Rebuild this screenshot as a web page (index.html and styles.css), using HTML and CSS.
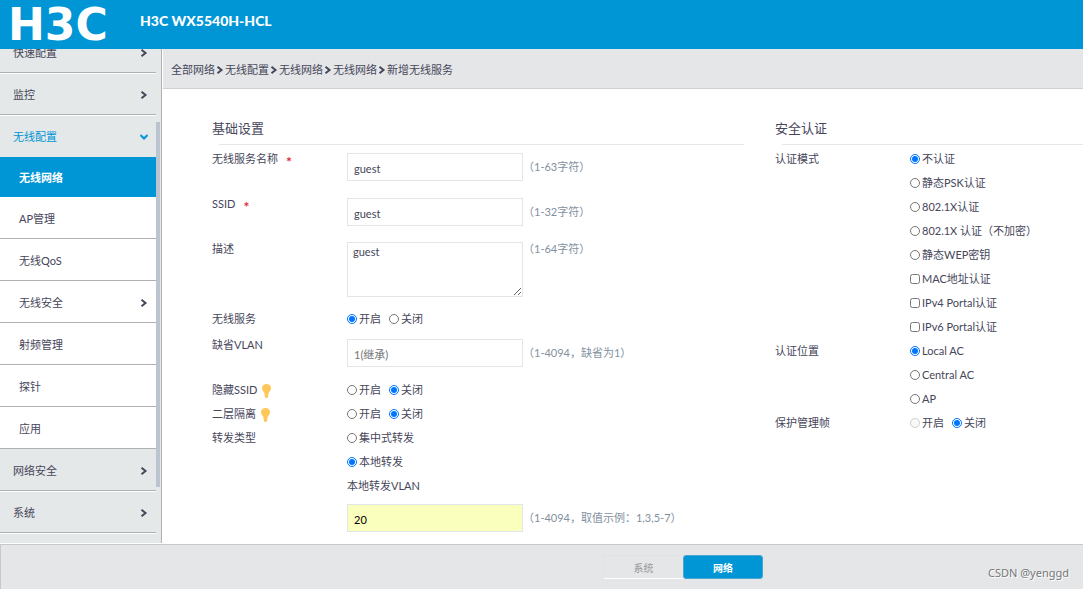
FILE: index.html
```html
<!DOCTYPE html>
<html lang="zh-CN">
<head>
  <meta charset="utf-8">
  <title>H3C WX5540H-HCL</title>
  <link rel="stylesheet" href="styles.css">
</head>
<body>

  <!-- Shared icons -->
  <svg class="sprite" aria-hidden="true">
    <symbol id="right" viewBox="0 0 8 8"><path d="M1.5 0.8 L5.5 4 L1.5 7.2" fill="none" stroke="currentColor" stroke-width="2"/></symbol>
    <symbol id="down" viewBox="0 0 8 8"><path d="M0.5 2 L4 5.5 L7.5 2" fill="none" stroke="currentColor" stroke-width="2"/></symbol>
    <symbol id="bulb" viewBox="0 0 9 14"><path d="M4.5 0 C2 0 0 1.900 0 4.300 C0 6.500 2 7.600 2.500 9.500 L2.800 12.500 Q3 14 4.500 14 Q6 14 6.200 12.500 L6.500 9.500 C7 7.600 9 6.500 9 4.300 C9 1.900 7 0 4.500 0 Z" fill="#ffc658"/></symbol>
  </svg>

  <header class="header">
    <div class="logo">H3C</div>
    <h1>H3C WX5540H-HCL</h1>
  </header>

  <div class="main">
    <nav class="sidebar">
      <div class="menu">
        <a class="item" href="#">快速配置<svg class="arrow"><use href="#right"/></svg></a>
        <a class="item" href="#">监控<svg class="arrow"><use href="#right"/></svg></a>
        <a class="item open" href="#">无线配置<svg class="arrow"><use href="#down"/></svg></a>
        <a class="sub active" href="#">无线网络</a>
        <a class="sub" href="#">AP管理</a>
        <a class="sub" href="#">无线QoS</a>
        <a class="sub" href="#">无线安全<svg class="arrow"><use href="#right"/></svg></a>
        <a class="sub" href="#">射频管理</a>
        <a class="sub" href="#">探针</a>
        <a class="sub" href="#">应用</a>
        <a class="item" href="#">网络安全<svg class="arrow"><use href="#right"/></svg></a>
        <a class="item" href="#">系统<svg class="arrow"><use href="#right"/></svg></a>
      </div>
      <div class="thumb"></div>
    </nav>

    <main class="content">
      <div class="breadcrumb">
        <a href="#">全部网络</a><svg><use href="#right"/></svg>
        <a href="#">无线配置</a><svg><use href="#right"/></svg>
        <a href="#">无线网络</a><svg><use href="#right"/></svg>
        <a href="#">无线网络</a><svg><use href="#right"/></svg>
        <span>新增无线服务</span>
      </div>

      <form class="form">
        <!-- Basic settings -->
        <section>
          <h2>基础设置</h2>
          <div class="row field">
            <label class="name" for="service">无线服务名称<b>*</b></label>
            <div class="control">
              <input class="box" id="service" type="text" value="guest"><span class="hint">（1-63字符）</span>
            </div>
          </div>
          <div class="row field">
            <label class="name" for="ssid">SSID<b>*</b></label>
            <div class="control">
              <input class="box" id="ssid" type="text" value="guest"><span class="hint">（1-32字符）</span>
            </div>
          </div>
          <div class="row field">
            <label class="name" for="desc">描述</label>
            <div class="control top">
              <textarea class="box" id="desc">guest</textarea><span class="hint">（1-64字符）</span>
            </div>
          </div>
          <div class="row spaced">
            <span class="name">无线服务</span>
            <div class="options inline">
              <label><input type="radio" name="enable" checked>开启</label>
              <label><input type="radio" name="enable">关闭</label>
            </div>
          </div>
          <div class="row field">
            <label class="name" for="vlan">缺省VLAN</label>
            <div class="control">
              <input class="box" id="vlan" type="text" placeholder="1(继承)"><span class="hint">（1-4094，缺省为1）</span>
            </div>
          </div>
          <div class="row">
            <span class="name">隐藏SSID<svg class="bulb"><use href="#bulb"/></svg></span>
            <div class="options inline">
              <label><input type="radio" name="hide">开启</label>
              <label><input type="radio" name="hide" checked>关闭</label>
            </div>
          </div>
          <div class="row">
            <span class="name">二层隔离<svg class="bulb"><use href="#bulb"/></svg></span>
            <div class="options inline">
              <label><input type="radio" name="isolate">开启</label>
              <label><input type="radio" name="isolate" checked>关闭</label>
            </div>
          </div>
          <div class="row">
            <span class="name">转发类型</span>
            <div class="options">
              <label><input type="radio" name="forward">集中式转发</label>
              <label><input type="radio" name="forward" checked>本地转发</label>
              <label for="local">本地转发VLAN</label>
              <div class="control">
                <input class="box filled" id="local" type="text" value="20"><span class="hint">（1-4094，取值示例：1,3,5-7）</span>
              </div>
            </div>
          </div>
        </section>

        <!-- Security -->
        <section>
          <h2>安全认证</h2>
          <div class="row">
            <span class="name">认证模式</span>
            <div class="options">
              <label><input type="radio" name="auth" checked>不认证</label>
              <label><input type="radio" name="auth">静态PSK认证</label>
              <label><input type="radio" name="auth">802.1X认证</label>
              <label><input type="radio" name="auth">802.1X 认证（不加密）</label>
              <label><input type="radio" name="auth">静态WEP密钥</label>
              <label><input type="checkbox">MAC地址认证</label>
              <label><input type="checkbox">IPv4 Portal认证</label>
              <label><input type="checkbox">IPv6 Portal认证</label>
            </div>
          </div>
          <div class="row">
            <span class="name">认证位置</span>
            <div class="options">
              <label><input type="radio" name="place" checked>Local AC</label>
              <label><input type="radio" name="place">Central AC</label>
              <label><input type="radio" name="place">AP</label>
            </div>
          </div>
          <div class="row">
            <span class="name">保护管理帧</span>
            <div class="options inline">
              <label><input type="radio" name="pmf" disabled>开启</label>
              <label><input type="radio" name="pmf" checked>关闭</label>
            </div>
          </div>
        </section>
      </form>
    </main>
  </div>

  <footer class="footer">
    <button class="tab" type="button">系统</button>
    <button class="tab current" type="button">网络</button>
    <span class="mark">CSDN @yenggd</span>
  </footer>

</body>
</html>
```

FILE: styles.css
```css
* {
  box-sizing: border-box;
}

body {
  margin: 0;
  height: 100vh;
  display: flex;
  flex-direction: column;
  overflow: hidden;
  background: #fff;
  color: #46465a;
  font-family: Lato, "Noto Sans CJK SC", sans-serif;
  font-size: 11px;
  line-height: 24px;
}

a {
  color: inherit;
  text-decoration: none;
}

.sprite {
  display: none;
}

.header {
  height: 49px;
  flex: none;
  display: flex;
  background: #0096d6;
  color: #fff;
}

.logo {
  width: 140px;
  padding-left: 8px;
  font: bold 44px/49px "DejaVu Sans", sans-serif;
}

.header h1 {
  margin: 0;
  font-size: 14px;
  font-weight: 900;
  line-height: 42px;
}

.main {
  flex: 1;
  min-height: 0;
  display: flex;
}

/* left menu */
.sidebar {
  position: relative;
  width: 162px;
  flex: none;
  margin-right: 1px;
  padding-right: 5px;
  overflow: hidden;
  background: #e4e8e8;
  border-right: 1px solid #b0b2b2;
}

/* list is scrolled down a little */
.menu {
  margin-top: -18px;
}

.item,
.sub {
  display: flex;
  align-items: center;
  justify-content: space-between;
  height: 42px;
  padding: 2px 8px 0 13px;
  border-bottom: 1px solid #b0b2b2;
}

.item {
  box-shadow: 0 1px #fff;
}

.open {
  color: #0096d6;
  border-bottom: 0;
  box-shadow: none;
}

.sub {
  padding-left: 19px;
  background: #fff;
}

.active {
  height: 40px;
  background: #0096d6;
  border-bottom: 0;
  color: #fff;
  font-weight: bold;
}

.arrow {
  width: 8px;
  height: 8px;
}

.thumb {
  position: absolute;
  top: 73px;
  right: 1px;
  width: 4px;
  height: 365px;
  background: #bcc5cf;
}

/* content */
.content {
  flex: 1;
  min-width: 0;
}

.breadcrumb {
  display: flex;
  align-items: center;
  height: 40px;
  padding: 2px 8px 0;
  background: #e5e6e8;
  border-bottom: 1px solid #cfd0d1;
}

.breadcrumb svg {
  width: 8px;
  height: 8px;
  margin: 0 1px;
}

.form {
  display: grid;
  grid-template-columns: 19fr 11fr;
  column-gap: 31px;
  padding: 26px 0 0 49px;
}

h2 {
  margin: 0 0 2px;
  font-size: 13px;
  font-weight: normal;
  line-height: 26px;
}

h2::after {
  content: "";
  display: block;
  height: 1px;
  margin: 3px 0 0 7px;
  background: #e5e6e8;
}

.row {
  display: flex;
}

.field {
  min-height: 45px;
}

.spaced {
  margin-bottom: 2px;
}

.name {
  width: 135px;
  flex: none;
}

.name b {
  display: inline-block;
  height: 20px;
  margin-left: 8px;
  color: #e8243c;
  font-size: 14px;
  line-height: 30px;
  vertical-align: top;
}

.bulb {
  width: 9px;
  height: 14px;
  margin-left: 5px;
  vertical-align: middle;
}

.control {
  display: flex;
  align-items: center;
  height: 28px;
  margin-top: 6px;
}

.top {
  align-items: flex-start;
  height: 55px;
  margin: 5px 0 10px;
}

.box {
  width: 176px;
  height: 100%;
  padding: 2px 6px 0;
  border: 1px solid #e3e6e8;
  border-radius: 0;
  background: #fff;
  color: inherit;
  font: inherit;
}

textarea.box {
  padding: 0 5px;
  line-height: 18px;
}

.box.filled {
  background: #faffbd;
  color: #000;
}

.hint {
  color: #8290a0;
}

.top .hint {
  line-height: 14px;
}

.options {
  display: flex;
  flex-direction: column;
}

.inline {
  flex-direction: row;
  gap: 8px;
}

.options label {
  display: flex;
  align-items: center;
  height: 24px;
}

input[type="radio"],
input[type="checkbox"] {
  width: 10px;
  height: 10px;
  margin: 0 2px 0 0;
}

/* bottom bar */
.footer {
  position: relative;
  flex: none;
  display: flex;
  align-items: center;
  height: 45px;
  margin-top: 1px;
  padding-left: 602px;
  background: #e5e6e8;
  border: 1px solid #c8c9cb;
  border-width: 1px 0 0 1px;
}

.tab {
  width: 80px;
  height: 24px;
  padding: 0;
  border: 1px solid #e0e2e8;
  border-bottom-color: #fff;
  border-right: 0;
  background: #e5e6e8;
  color: #999;
  font: inherit;
  font-size: 10px;
}

.current {
  border: 1px solid #4aa5d0;
  border-radius: 3px;
  background: #0096d6;
  color: #fff;
  font-weight: bold;
}

.mark {
  position: absolute;
  right: 14px;
  bottom: 4px;
  color: #777;
  font-family: "Noto Sans", sans-serif;
  text-shadow: 1px 1px #fff;
}
```
